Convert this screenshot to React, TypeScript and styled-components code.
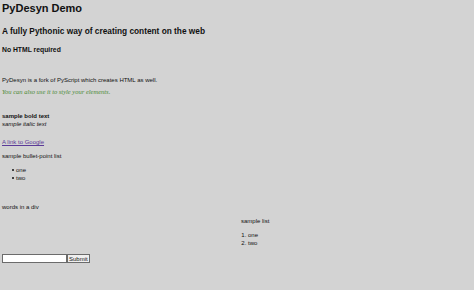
import React from 'react';
import styled, { createGlobalStyle } from 'styled-components';

const Global = createGlobalStyle`
  html, body {
    margin: 0;
    padding: 0;
    background: #d3d3d3;
  }
  body {
    font-family: "Liberation Sans", Arial, sans-serif;
    color: #111;
    font-size: 6px;
    line-height: 8px;
  }
`;

const Page = styled.div`
  padding: 0 2px;
  height: 290px;
  box-sizing: border-box;
`;

const Title = styled.h1`
  margin: 0;
  padding-top: 1px;
  font-size: 11px;
  line-height: 15px;
  font-weight: 700;
`;

const Subtitle = styled.h2`
  margin: 10px 0 0;
  font-size: 8.3px;
  line-height: 11px;
  font-weight: 700;
`;

const Minor = styled.h3`
  margin: 9px 0 0;
  font-size: 6.8px;
  line-height: 8px;
  font-weight: 700;
`;

const Para = styled.p<{ gap?: number }>`
  margin: ${(p) => p.gap ?? 0}px 0 0;
`;

const Fancy = styled.p`
  margin: 4px 0 0;
  color: #4a8a36;
  font-family: "Liberation Serif", serif;
  font-style: italic;
  font-size: 6.5px;
`;

const Strong = styled.div`
  margin-top: 16px;
  font-weight: 700;
`;

const Em = styled.div`
  font-style: italic;
`;

const Link = styled.a`
  display: inline-block;
  margin-top: 10px;
  color: #5b3a98;
  text-decoration: underline;
`;

const Bullets = styled.ul`
  margin: 6px 0 0;
  padding-left: 14px;
  list-style: none;
`;

const Bullet = styled.li`
  position: relative;
  &::before {
    content: '';
    position: absolute;
    left: -4.5px;
    top: 3px;
    width: 2px;
    height: 2px;
    border-radius: 50%;
    background: #111;
  }
`;

const Numbered = styled.ol`
  margin: 6px 0 0;
  padding-left: 7px;
`;

const Item = styled.li``;

const Words = styled.div`
  margin-top: 21px;
`;

const Centered = styled.div`
  margin: 6px 0 0 239px;
`;

const Form = styled.form`
  display: flex;
  margin-top: 7px;
`;

const Field = styled.input`
  width: 65px;
  height: 9px;
  box-sizing: border-box;
  border: 1px solid #6b6b6b;
  background: #fff;
  padding: 0;
  margin: 0;
`;

const Submit = styled.button`
  height: 9px;
  box-sizing: border-box;
  border: 1px solid #6b6b6b;
  background: #efefef;
  font: 6px/1 "Liberation Sans", Arial, sans-serif;
  color: #111;
  padding: 0 1px;
  margin: 0;
`;

export default function App() {
  return (
    <Page>
      <Global />
      <Title>PyDesyn Demo</Title>
      <Subtitle>A fully Pythonic way of creating content on the web</Subtitle>
      <Minor>No HTML required</Minor>
      <Para gap={22}>PyDesyn is a fork of PyScript which creates HTML as well.</Para>
      <Fancy>You can also use it to style your elements.</Fancy>
      <Strong>sample bold text</Strong>
      <Em>sample italic text</Em>
      <Link href="#">A link to Google</Link>
      <Para gap={6}>sample bullet-point list</Para>
      <Bullets>
        <Bullet>one</Bullet>
        <Bullet>two</Bullet>
      </Bullets>
      <Words>words in a div</Words>
      <Centered>
        <div>sample list</div>
        <Numbered>
          <Item>one</Item>
          <Item>two</Item>
        </Numbered>
      </Centered>
      <Form onSubmit={(e) => e.preventDefault()}>
        <Field type="text" />
        <Submit type="submit">Submit</Submit>
      </Form>
    </Page>
  );
}
